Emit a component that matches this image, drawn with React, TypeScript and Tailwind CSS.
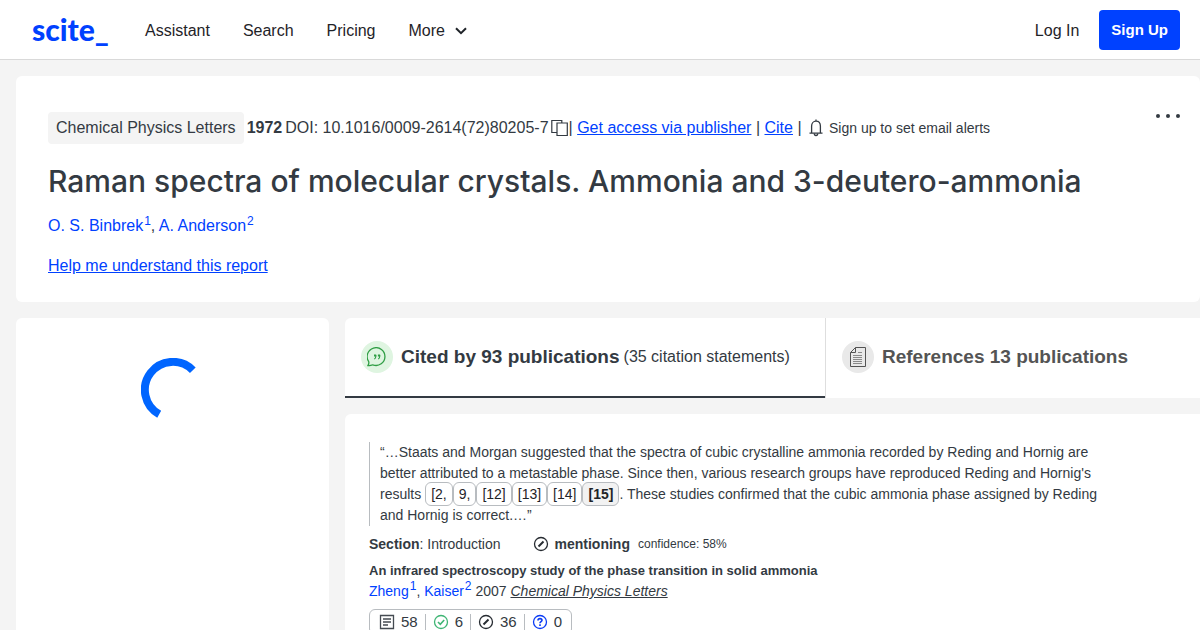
import type { ReactNode } from "react";
import { clsx } from "clsx";

const NAV_LINKS = ["Assistant", "Search", "Pricing"];

const CITATION_REFS = [
  { label: "[2," },
  { label: "9," },
  { label: "[12]" },
  { label: "[13]" },
  { label: "[14]" },
  { label: "[15]", active: true },
];

function ChevronIcon() {
  return (
    <svg width="12" height="8" viewBox="0 0 12 8" fill="none" stroke="#1f2328" strokeWidth="2" aria-hidden="true">
      <path d="M1 1.2 6 6.2 11 1.2" />
    </svg>
  );
}

function CopyIcon() {
  return (
    <svg width="18" height="18" viewBox="0 0 18 18" fill="none" stroke="#333a42" strokeWidth="1.2" aria-hidden="true">
      <path d="M6 13.5H.8v-12h10V4" />
      <path d="M6 4h10.3v12.5H6z" />
    </svg>
  );
}

function BellIcon() {
  return (
    <svg width="14" height="18" viewBox="0 0 14 18" fill="none" stroke="#333a42" strokeWidth="1.3" aria-hidden="true">
      <path d="M7 .5v1.6M.5 14.2h13M2.6 14V7.2c0-3 1.800-5 4.400-5s4.400 2 4.400 5V14" />
      <path d="M5.3 14.5c0 1.200.7 2 1.700 2s1.700-.8 1.700-2" />
    </svg>
  );
}

function QuoteIcon() {
  return (
    <svg width="20" height="20" viewBox="0 0 20 20" fill="none" stroke="#2f9e44" strokeWidth="1.3" aria-hidden="true">
      <path d="M.8 18.600c1-1.200 1.300-2.500.9-4A8.900 8.900 0 1 1 6.200 18c-1.600-.3-3.300.8-5.400.6Z" strokeLinejoin="round" />
      <path d="M8.800 8v1.500c0 1.200-.5 2-1.500 2.600M12.700 8v1.500c0 1.200-.5 2-1.500 2.600" strokeWidth="1.1" />
      <path d="M7 7.500h2.200v2H7zM10.900 7.500h2.200v2h-2.200z" fill="#2f9e44" stroke="none" />
    </svg>
  );
}

function DocumentIcon() {
  return (
    <svg width="16" height="20" viewBox="0 0 16 20" fill="none" stroke="#545454" aria-hidden="true">
      <path d="M5.5.5h10v19H.5v-14l5-5Z" />
      <path d="M5.5.5v5h-5" />
      <path d="M8 5.5h4M3 8.5h9M3 10.5h9M3 12.5h9M3 14.5h9M3 16.5h9" stroke="#8a8a8a" />
    </svg>
  );
}

function MentionIcon() {
  return (
    <svg width="16" height="16" viewBox="0 0 16 16" fill="none" stroke="#262b31" aria-hidden="true">
      <circle cx="8" cy="8" r="6.5" strokeWidth="1.3" />
      <path d="m5.5 10.5 5-5" strokeWidth="1.9" />
    </svg>
  );
}

function StatementsIcon() {
  return (
    <svg width="16" height="16" viewBox="0 0 16 16" fill="none" stroke="#454b52" strokeWidth="1.3" aria-hidden="true">
      <path d="M1.5 1.5h13v13h-13z" />
      <path d="M4 5h8M4 8h8M4 11h5" />
    </svg>
  );
}

function SupportIcon() {
  return (
    <svg width="16" height="16" viewBox="0 0 16 16" fill="none" stroke="#3fb574" strokeWidth="1.3" aria-hidden="true">
      <circle cx="8" cy="8" r="6.5" />
      <path d="m5 8 2.300 2.300L11.200 6" strokeWidth="1.6" />
    </svg>
  );
}

function ContrastIcon() {
  return (
    <svg width="16" height="16" viewBox="0 0 16 16" fill="none" stroke="#0b3cf5" strokeWidth="1.3" aria-hidden="true">
      <circle cx="8" cy="8" r="6.5" />
      <path d="M6 6.500c0-1.200.8-1.900 2-1.900s2 .7 2 1.700c0 1.300-2 1.400-2 2.900M8 10.300v1.600" strokeWidth="1.6" />
    </svg>
  );
}

function Spinner() {
  return (
    <svg className="mx-auto" width="64" height="64" viewBox="0 0 64 64" fill="none" role="status" aria-label="Loading">
      <path d="M18.2 56.3A28 28 0 1 1 51.8 12.2" stroke="#0065ff" strokeWidth="8" />
    </svg>
  );
}

function AuthorLink({ name, index }: { name: string; index: number }) {
  return (
    <a href="#author" className="text-[#0041ff]">
      {name}
      <sup className="ml-px text-xs">{index}</sup>
    </a>
  );
}

function Tally({ icon, count }: { icon: ReactNode; count: number }) {
  return (
    <span className="flex items-center gap-1.5 border-l border-[#b8bcc0] px-[7px] first:border-l-0">
      {icon}
      {count}
    </span>
  );
}

function Header() {
  return (
    <header className="flex h-[60px] shrink-0 items-center border-b border-[#d9d9d9] bg-white pr-5 pl-8 text-base text-[#1f2328]">
      <a href="#home" className="pb-0.5 font-['Lato',sans-serif] text-[30px] leading-8 font-black text-[#0041ff]">
        scite_
      </a>
      <nav className="ml-9 flex items-center gap-[33px] pt-0.5">
        {NAV_LINKS.map((link) => (
          <a key={link} href="#nav">
            {link}
          </a>
        ))}
        <button className="flex items-center gap-2.5">
          More
          <ChevronIcon />
        </button>
      </nav>
      <a href="#login" className="ml-auto pt-0.5">
        Log In
      </a>
      <button className="ml-5 h-10 rounded bg-[#0041ff] px-3 pt-0.5 text-[15px] font-semibold text-white">
        Sign Up
      </button>
    </header>
  );
}

function PaperSummary() {
  return (
    <section className="relative rounded-md bg-white px-8 pt-9 pb-6">
      <div className="flex h-8 items-center whitespace-pre">
        <span className="rounded bg-[#f4f4f4] px-2 py-1">Chemical Physics Letters</span>
        <b className="ml-[3px]">1972</b>
        <span className="ml-[3px]">DOI: 10.1016/0009-2614(72)80205-7</span>
        <button className="ml-0.5" aria-label="Copy DOI">
          <CopyIcon />
        </button>
        <span>| </span>
        <a href="#publisher" className="text-[#0041ff] underline">
          Get access via publisher
        </a>
        <span> | </span>
        <a href="#cite" className="text-[#0041ff] underline">
          Cite
        </a>
        <span> | </span>
        <button className="ml-[3px] flex items-center gap-1.5 text-sm">
          <BellIcon />
          Sign up to set email alerts
        </button>
      </div>
      <h1 className="mt-4 font-['Inter',sans-serif] text-[30px] leading-[42px] font-medium">
        Raman spectra of molecular crystals. Ammonia and 3-deutero-ammonia
      </h1>
      <p className="mt-3 leading-6">
        <AuthorLink name="O. S. Binbrek" index={1} />, <AuthorLink name="A. Anderson" index={2} />
      </p>
      <a href="#explain" className="mt-4 inline-block leading-6 text-[#0041ff] underline">
        Help me understand this report
      </a>
      <button className="absolute top-9 right-5 flex gap-1.5 py-0.5" aria-label="More options">
        <span className="size-1 rounded-full bg-[#333a42]" />
        <span className="size-1 rounded-full bg-[#333a42]" />
        <span className="size-1 rounded-full bg-[#333a42]" />
      </button>
    </section>
  );
}

function Tabs() {
  return (
    <div className="flex h-20 rounded-tl-md bg-white" role="tablist">
      <button
        role="tab"
        aria-selected="true"
        className="flex w-[480px] shrink-0 items-center border-b-2 border-[#333a42] px-4 whitespace-nowrap"
      >
        <span className="mr-2 flex size-8 items-center justify-center rounded-full bg-[#dff5e1]">
          <QuoteIcon />
        </span>
        <span className="mr-1 text-[19px] font-semibold">Cited by 93 publications</span>
        (35 citation statements)
      </button>
      <button
        role="tab"
        aria-selected="false"
        className="flex grow items-center border-l border-[#dedede] px-4 pb-0.5 whitespace-nowrap text-[#545454]"
      >
        <span className="mr-2 flex size-8 items-center justify-center rounded-full bg-[#e9e9e9]">
          <DocumentIcon />
        </span>
        <span className="text-[19px] font-semibold">References 13 publications</span>
      </button>
    </div>
  );
}

function CitationStatement() {
  return (
    <article className="mt-4 grow rounded-tl-md bg-white px-6 pt-7 text-sm">
      <blockquote className="max-w-[740px] border-l border-[#b8bcc0] pl-2.5 leading-[21px]">
        “…Staats and Morgan suggested that the spectra of cubic crystalline ammonia recorded by Reding and Hornig are
        better attributed to a metastable phase. Since then, various research groups have reproduced Reding and
        Hornig's results{" "}
        {CITATION_REFS.map((ref) => (
          <a
            key={ref.label}
            href="#reference"
            className={clsx(
              "-my-1 inline-block rounded-md border border-[#b8bcc0] px-[5px] py-0.5 leading-[18px] text-[#1f2328]",
              ref.active && "bg-[#f2f2f2] font-bold"
            )}
          >
            {ref.label}
          </a>
        ))}
        <span>. These studies confirmed that the cubic ammonia phase assigned by Reding and Hornig is correct.…”</span>
      </blockquote>
      <div className="mt-2 flex items-center leading-5">
        <span>
          <b>Section</b>: Introduction
        </span>
        <span className="ml-8 flex items-center">
          <MentionIcon />
          <b className="mr-2 ml-1.5">mentioning</b>
          <span className="text-xs">confidence: 58%</span>
        </span>
      </div>
      <h2 className="mt-2 text-[13px] leading-[18px] font-bold">
        An infrared spectroscopy study of the phase transition in solid ammonia
      </h2>
      <p className="leading-[22px]">
        <AuthorLink name="Zheng" index={1} />, <AuthorLink name="Kaiser" index={2} /> 2007{" "}
        <a href="#journal" className="italic underline">
          Chemical Physics Letters
        </a>
      </p>
      <div className="mt-[7px] inline-flex rounded-md border border-[#b8bcc0] px-0.5 py-1 text-[15px] leading-4">
        <Tally icon={<StatementsIcon />} count={58} />
        <Tally icon={<SupportIcon />} count={6} />
        <Tally icon={<MentionIcon />} count={36} />
        <Tally icon={<ContrastIcon />} count={0} />
      </div>
    </article>
  );
}

export default function App() {
  return (
    <div className="flex min-h-screen flex-col overflow-x-hidden bg-[#f4f4f4] font-['Liberation_Sans',Arial,sans-serif] text-base text-[#333a42]">
      <Header />
      <main className="flex grow flex-col gap-4 pt-4 pl-4">
        <PaperSummary />
        <div className="flex grow gap-4">
          <aside className="w-[313px] shrink-0 rounded-t-md bg-white pt-10">
            <Spinner />
          </aside>
          <section className="flex min-w-0 grow flex-col">
            <Tabs />
            <CitationStatement />
          </section>
        </div>
      </main>
    </div>
  );
}
